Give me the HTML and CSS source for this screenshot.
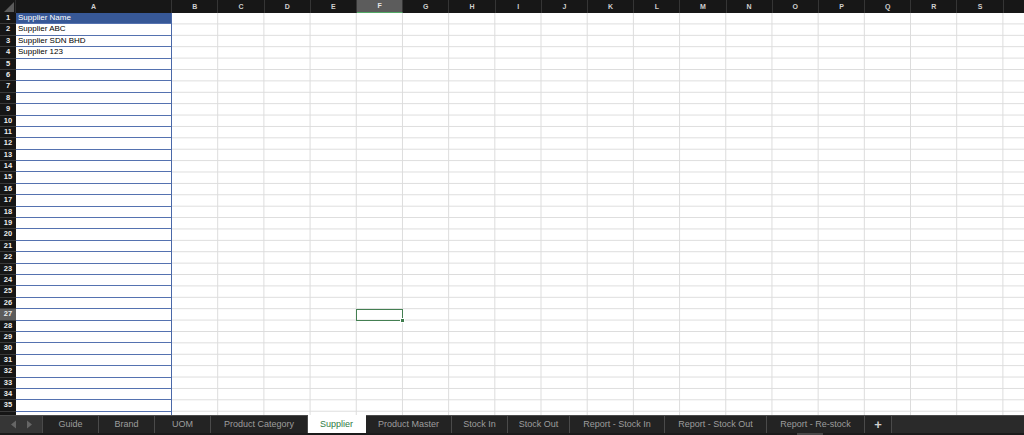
FILE: index.html
```html
<!DOCTYPE html>
<html>
<head>
<meta charset="utf-8">
<link rel="stylesheet" href="styles.css">
</head>
<body>
<div class="app">
  <div class="sheet">
    <div class="colheads">
      <div class="corner"><svg width="16" height="13" viewBox="0 0 16 13"><polygon points="14,2 14,12 4,12" fill="#5b5b5b"/></svg></div>
      <div class="ch ch-a">A</div>
      <div class="ch">B</div><div class="ch">C</div><div class="ch">D</div><div class="ch">E</div>
      <div class="ch ch-sel">F</div>
      <div class="ch">G</div><div class="ch">H</div><div class="ch">I</div><div class="ch">J</div>
      <div class="ch">K</div><div class="ch">L</div><div class="ch">M</div><div class="ch">N</div>
      <div class="ch">O</div><div class="ch">P</div><div class="ch">Q</div><div class="ch">R</div>
      <div class="ch">S</div><div class="ch ch-fill"></div>
    </div>
    <div class="body">
      <div class="rownums">
        <div class="rn">1</div><div class="rn">2</div><div class="rn">3</div><div class="rn">4</div>
        <div class="rn">5</div><div class="rn">6</div><div class="rn">7</div><div class="rn">8</div>
        <div class="rn">9</div><div class="rn">10</div><div class="rn">11</div><div class="rn">12</div>
        <div class="rn">13</div><div class="rn">14</div><div class="rn">15</div><div class="rn">16</div>
        <div class="rn">17</div><div class="rn">18</div><div class="rn">19</div><div class="rn">20</div>
        <div class="rn">21</div><div class="rn">22</div><div class="rn">23</div><div class="rn">24</div>
        <div class="rn">25</div><div class="rn">26</div><div class="rn rn-sel">27</div><div class="rn">28</div>
        <div class="rn">29</div><div class="rn">30</div><div class="rn">31</div><div class="rn">32</div>
        <div class="rn">33</div><div class="rn">34</div><div class="rn">35</div><div class="rn"></div>
      </div>
      <div class="cola">
        <div class="ca ca-head">Supplier Name</div>
        <div class="ca">Supplier ABC</div>
        <div class="ca">Supplier SDN BHD</div>
        <div class="ca">Supplier 123</div>
        <div class="ca"></div><div class="ca"></div><div class="ca"></div><div class="ca"></div>
        <div class="ca"></div><div class="ca"></div><div class="ca"></div><div class="ca"></div>
        <div class="ca"></div><div class="ca"></div><div class="ca"></div><div class="ca"></div>
        <div class="ca"></div><div class="ca"></div><div class="ca"></div><div class="ca"></div>
        <div class="ca"></div><div class="ca"></div><div class="ca"></div><div class="ca"></div>
        <div class="ca"></div><div class="ca"></div><div class="ca"></div><div class="ca"></div>
        <div class="ca"></div><div class="ca"></div><div class="ca"></div><div class="ca"></div>
        <div class="ca"></div><div class="ca"></div><div class="ca"></div><div class="ca"></div>
      </div>
      <div class="grid">
        <div class="selection"><span class="handle"></span></div>
      </div>
    </div>
  </div>
  <div class="tabbar">
    <div class="tabs">
      <div class="nav">
        <svg width="43" height="17" viewBox="0 0 43 17"><polygon points="16,4.5 16,12.5 11,8.5" fill="#666"/><polygon points="27,4.5 27,12.5 32,8.5" fill="#666"/></svg>
      </div>
      <div class="tab t1">Guide</div>
      <div class="tab t2">Brand</div>
      <div class="tab t3">UOM</div>
      <div class="tab t4">Product Category</div>
      <div class="tab t5 active">Supplier</div>
      <div class="tab t6">Product Master</div>
      <div class="tab t7">Stock In</div>
      <div class="tab t8">Stock Out</div>
      <div class="tab t9">Report - Stock In</div>
      <div class="tab t10">Report - Stock Out</div>
      <div class="tab t11">Report - Re-stock</div>
      <div class="tab add">+</div>
      <div class="tabfill"></div>
    </div>
    <div class="strip"><span class="thumb"></span></div>
  </div>
</div>
</body>
</html>
```

FILE: styles.css
```css
* { box-sizing: border-box; }
html, body { margin: 0; padding: 0; }
body {
  width: 1024px;
  height: 435px;
  overflow: hidden;
  background: #ffffff;
  font-family: "Liberation Sans", Arial, sans-serif;
}
.app {
  display: flex;
  flex-direction: column;
  height: 435px;
}
.sheet {
  height: 415px;
  display: flex;
  flex-direction: column;
  overflow: hidden;
}
.colheads {
  display: flex;
  height: 13px;
  flex: 0 0 13px;
  background: #171717;
}
.corner {
  width: 16px;
  flex: 0 0 16px;
  height: 13px;
  border-right: 1px solid #2e2e2e;
}
.corner svg { display: block; }
.ch {
  flex: 0 0 46.2px;
  width: 46.2px;
  height: 13px;
  border-right: 1px solid #353535;
  color: #cfcfcf;
  font-size: 7px;
  font-weight: bold;
  text-align: center;
  line-height: 13px;
}
.ch-a { flex: 0 0 156.3px; width: 156.3px; }
.ch-sel {
  background: #5c5c5c;
  border-bottom: 1px solid #52a865;
  line-height: 12px;
  color: #e6e6e6;
}
.ch-fill { flex: 1 1 auto; border-right: none; }
.body {
  flex: 1 1 auto;
  display: flex;
  overflow: hidden;
}
.rownums {
  flex: 0 0 16px;
  width: 16px;
  background: #161616;
  display: flex;
  flex-direction: column;
}
.rn {
  flex: 0 0 11.4px;
  height: 11.4px;
  border-bottom: 1px solid #3a3a3a;
  color: #ececec;
  font-size: 7.5px;
  font-weight: bold;
  text-align: center;
  line-height: 10.4px;
}
.rn-sel { background: #5c5c5c; }
.cola {
  flex: 0 0 156.3px;
  width: 156.3px;
  display: flex;
  flex-direction: column;
  border-right: 1px solid #4a68a8;
}
.ca {
  flex: 0 0 11.4px;
  height: 11.4px;
  border-bottom: 1px solid #5572b0;
  font-size: 8px;
  line-height: 10.8px;
  padding-left: 2px;
  color: #000000;
  white-space: nowrap;
}
.ca-head {
  background: #375897;
  color: #ffffff;
}
.grid {
  flex: 1 1 auto;
  position: relative;
  background-color: #ffffff;
  background-image:
    linear-gradient(to left, #dcdcdc 1px, transparent 1px),
    linear-gradient(to top, #dcdcdc 1px, transparent 1px);
  background-size: 46.2px 11.4px;
  background-position: 0 0;
}
.selection {
  position: absolute;
  left: 184.2px;
  top: 296.2px;
  width: 46.6px;
  height: 11.8px;
  border: 1.5px solid #447f52;
}
.handle {
  position: absolute;
  right: -3px;
  bottom: -3px;
  width: 3px;
  height: 3px;
  background: #3f7c4d;
  border: 1px solid #ffffff;
  box-sizing: content-box;
}
.tabbar {
  height: 20px;
  flex: 0 0 20px;
  display: flex;
  flex-direction: column;
  background: #262626;
}
.tabs {
  display: flex;
  height: 18px;
  flex: 0 0 18px;
  border-top: 1px solid #4a4a4a;
}
.nav {
  flex: 0 0 43px;
  width: 43px;
  background: #363636;
  border-right: 1px solid #4a4a4a;
}
.nav svg { display: block; }
.tab {
  height: 17px;
  line-height: 17px;
  font-size: 9px;
  color: #9d9d9d;
  text-align: center;
  white-space: nowrap;
  border-right: 1px solid #4a4a4a;
  background: #232323;
}
.t1 { flex: 0 0 56px; }
.t2 { flex: 0 0 56px; }
.t3 { flex: 0 0 56px; }
.t4 { flex: 0 0 97px; }
.t5 { flex: 0 0 58px; }
.t6 { flex: 0 0 86px; }
.t7 { flex: 0 0 56px; }
.t8 { flex: 0 0 62px; }
.t9 { flex: 0 0 95px; }
.t10 { flex: 0 0 102px; }
.t11 { flex: 0 0 98px; }
.tab.add {
  flex: 0 0 27px;
  font-size: 13px;
  font-weight: bold;
  color: #cfcfcf;
}
.tab.active {
  background: #ffffff;
  color: #2f7a43;
  border-right: 1px solid #ffffff;
  margin-top: -1px;
  height: 18px;
  line-height: 19px;
}
.tabfill {
  flex: 1 1 auto;
  background: #2a2a2a;
}
.strip {
  flex: 0 0 2px;
  height: 2px;
  background: #1b1b1b;
  position: relative;
}
.thumb {
  position: absolute;
  left: 797px;
  top: 0;
  width: 26px;
  height: 2px;
  background: #474747;
}
```
